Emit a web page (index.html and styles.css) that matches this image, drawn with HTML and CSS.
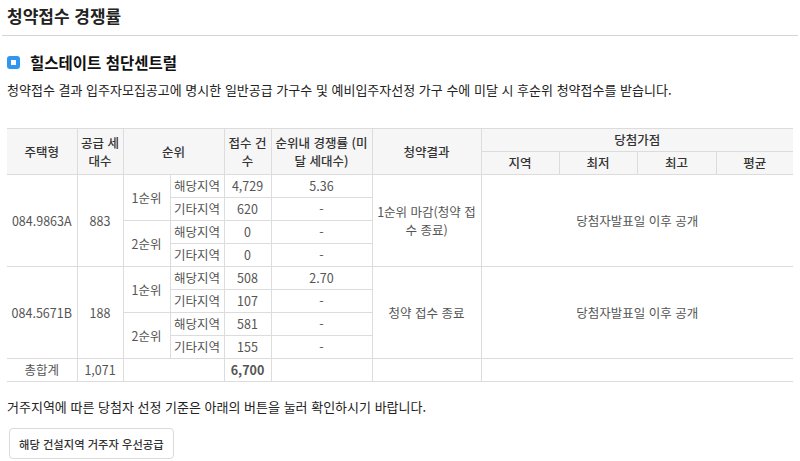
FILE: index.html
```html
<!DOCTYPE html>
<html lang="ko">
<head>
<meta charset="utf-8">
<link rel="stylesheet" href="styles.css">
</head>
<body>
<div class="page">
  <h1 class="title">청약접수 경쟁률</h1>
  <div class="content">
    <h2 class="subtitle"><span class="bullet"></span><span>힐스테이트 첨단센트럴</span></h2>
    <p class="desc">청약접수 결과 입주자모집공고에 명시한 일반공급 가구수 및 예비입주자선정 가구 수에 미달 시 후순위 청약접수를 받습니다.</p>
    <table class="grid">
      <colgroup>
        <col class="c70"><col class="c46"><col class="c47"><col class="c54"><col class="c47"><col class="c101"><col class="c109"><col class="c78"><col class="c78"><col class="c79"><col class="c77">
      </colgroup>
      <thead>
        <tr>
          <th rowspan="2">주택형</th>
          <th rowspan="2">공급 세대수</th>
          <th rowspan="2" colspan="2">순위</th>
          <th rowspan="2">접수 건수</th>
          <th rowspan="2">순위내 경쟁률 (미달 세대수)</th>
          <th rowspan="2">청약결과</th>
          <th colspan="4">당첨가점</th>
        </tr>
        <tr>
          <th>지역</th><th>최저</th><th>최고</th><th>평균</th>
        </tr>
      </thead>
      <tbody>
        <tr>
          <td rowspan="4">084.9863A</td>
          <td rowspan="4">883</td>
          <td rowspan="2">1순위</td>
          <td>해당지역</td><td>4,729</td><td>5.36</td>
          <td rowspan="4">1순위 마감(청약 접수 종료)</td>
          <td rowspan="4" colspan="4">당첨자발표일 이후 공개</td>
        </tr>
        <tr><td>기타지역</td><td>620</td><td>-</td></tr>
        <tr><td rowspan="2">2순위</td><td>해당지역</td><td>0</td><td>-</td></tr>
        <tr><td>기타지역</td><td>0</td><td>-</td></tr>
        <tr>
          <td rowspan="4">084.5671B</td>
          <td rowspan="4">188</td>
          <td rowspan="2">1순위</td>
          <td>해당지역</td><td>508</td><td>2.70</td>
          <td rowspan="4">청약 접수 종료</td>
          <td rowspan="4" colspan="4">당첨자발표일 이후 공개</td>
        </tr>
        <tr><td>기타지역</td><td>107</td><td>-</td></tr>
        <tr><td rowspan="2">2순위</td><td>해당지역</td><td>581</td><td>-</td></tr>
        <tr><td>기타지역</td><td>155</td><td>-</td></tr>
        <tr class="total">
          <td>총합계</td><td>1,071</td><td colspan="2"></td><td class="strong">6,700</td><td></td><td></td><td colspan="4"></td>
        </tr>
      </tbody>
    </table>
    <p class="note">거주지역에 따른 당첨자 선정 기준은 아래의 버튼을 눌러 확인하시기 바랍니다.</p>
    <button class="btn" type="button">해당 건설지역 거주자 우선공급</button>
  </div>
</div>
</body>
</html>
```

FILE: styles.css
```css
* { box-sizing: border-box; }
html, body {
  margin: 0;
  padding: 0;
  background: #fff;
}
body {
  font-family: "Noto Sans CJK KR", "Noto Sans", sans-serif;
  color: #222;
  font-size: 13px;
}
.page {
  padding: 0 2px;
}
.title {
  margin: 0;
  padding: 5px 5px 0;
  height: 36px;
  font-size: 17px;
  line-height: 22px;
  font-weight: 700;
  color: #222;
  border-bottom: 1px solid #d4d4d4;
}
.content {
  padding: 0 5px;
}
.subtitle {
  margin: 15px 0 0;
  display: flex;
  align-items: center;
  gap: 10px;
  font-size: 15.5px;
  line-height: 22px;
  font-weight: 700;
  color: #111;
}
.bullet {
  width: 13px;
  height: 13px;
  border: 4px solid #2f97ef;
  border-radius: 3px;
  background: #fff;
  flex: none;
}
.desc {
  margin: 8px 0 0;
  font-size: 13px;
  line-height: 18px;
  color: #222;
}
.grid {
  margin-top: 29px;
  width: 786px;
  table-layout: fixed;
  border-collapse: collapse;
  font-size: 12.5px;
  line-height: 18px;
}
.c70 { width: 70px; }
.c46 { width: 46px; }
.c47 { width: 47px; }
.c54 { width: 54px; }
.c101 { width: 101px; }
.c109 { width: 109px; }
.c78 { width: 78px; }
.c79 { width: 79px; }
.c77 { width: 77px; }
.grid th, .grid td {
  border: 1px solid #dcdcdc;
  padding: 2px 2px;
  text-align: center;
  vertical-align: middle;
  height: 23px;
}
.grid th {
  background: #f6f6f6;
  color: #333;
  font-weight: 500;
}
.grid td {
  color: #555;
}
.grid tr > :first-child { border-left: 0; }
.grid tr > :last-child { border-right: 0; }
.grid .total td { color: #555; }
.grid .strong { font-weight: 700; color: #444; }
.note {
  margin: 16px 0 0;
  font-size: 13px;
  line-height: 18px;
  color: #222;
}
.btn {
  margin: 12px 0 0 2px;
  height: 31px;
  padding: 0 9px;
  border: 1px solid #dadada;
  border-radius: 4px;
  background: #fff;
  font-family: "Noto Sans CJK KR", "Noto Sans", sans-serif;
  font-size: 11.3px;
  font-weight: 500;
  color: #333;
  cursor: pointer;
}
```
